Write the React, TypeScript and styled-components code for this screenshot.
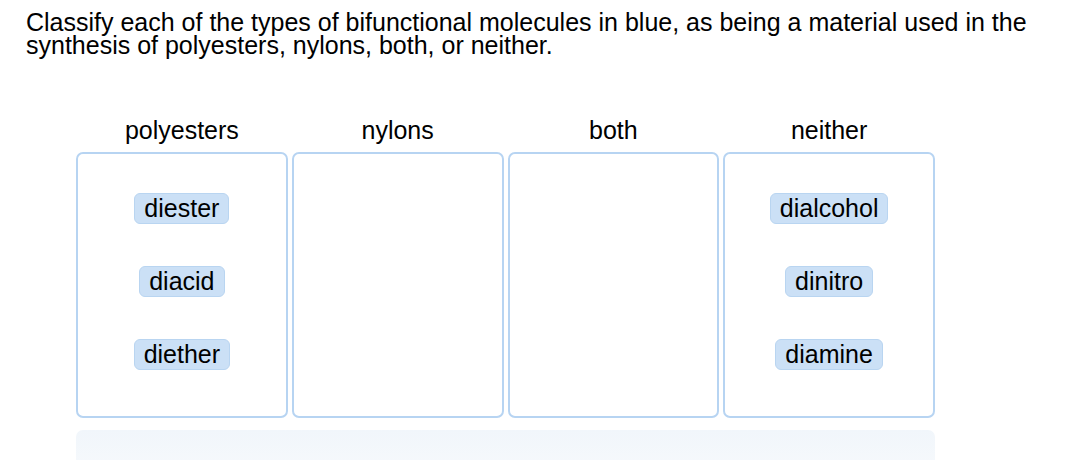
import React from "react";
import styled, { createGlobalStyle } from "styled-components";

const GlobalStyle = createGlobalStyle`
  body {
    margin: 0;
    background: #fff;
    font-family: "Liberation Sans", Arial, sans-serif;
    color: #000;
  }
`;

const Page = styled.div`
  width: 1068px;
  height: 460px;
  overflow: hidden;
`;

const Prompt = styled.p`
  margin: 0;
  padding: 11px 0 0 26px;
  font-size: 25px;
  line-height: 23px;
  width: 1020px;
`;

const Board = styled.div`
  margin: 58px 0 0 76px;
  width: 859px;
`;

const Columns = styled.div`
  display: grid;
  grid-template-columns: repeat(4, 1fr);
  column-gap: 4px;
`;

const Column = styled.div`
  display: flex;
  flex-direction: column;
`;

const Heading = styled.div`
  height: 37px;
  text-align: center;
  font-size: 25px;
  line-height: 30px;
`;

const Bin = styled.div`
  height: 266px;
  box-sizing: border-box;
  border: 2px solid #b7d4f2;
  border-radius: 7px;
  display: flex;
  flex-direction: column;
  align-items: center;
  padding-top: 39px;
  gap: 42px;
`;

const Chip = styled.div`
  height: 31px;
  box-sizing: border-box;
  padding: 0 9px;
  border: 1px solid #b9d5f1;
  border-radius: 6px;
  background: #cbe0f6;
  font-size: 25px;
  line-height: 28px;
`;

const Tray = styled.div`
  margin-top: 12px;
  height: 40px;
  border-radius: 7px;
  background: linear-gradient(#f1f6fb, #f6f9fc);
`;

const columns: { title: string; items: string[] }[] = [
  { title: "polyesters", items: ["diester", "diacid", "diether"] },
  { title: "nylons", items: [] },
  { title: "both", items: [] },
  { title: "neither", items: ["dialcohol", "dinitro", "diamine"] },
];

const App = () => {
  return (
    <Page>
      <GlobalStyle />
      <Prompt>
        Classify each of the types of bifunctional molecules in blue, as being a
        material used in the synthesis of polyesters, nylons, both, or neither.
      </Prompt>
      <Board>
        <Columns>
          {columns.map((c) => (
            <Column key={c.title}>
              <Heading>{c.title}</Heading>
              <Bin>
                {c.items.map((item) => (
                  <Chip key={item}>{item}</Chip>
                ))}
              </Bin>
            </Column>
          ))}
        </Columns>
        <Tray />
      </Board>
    </Page>
  );
};

export default App;
